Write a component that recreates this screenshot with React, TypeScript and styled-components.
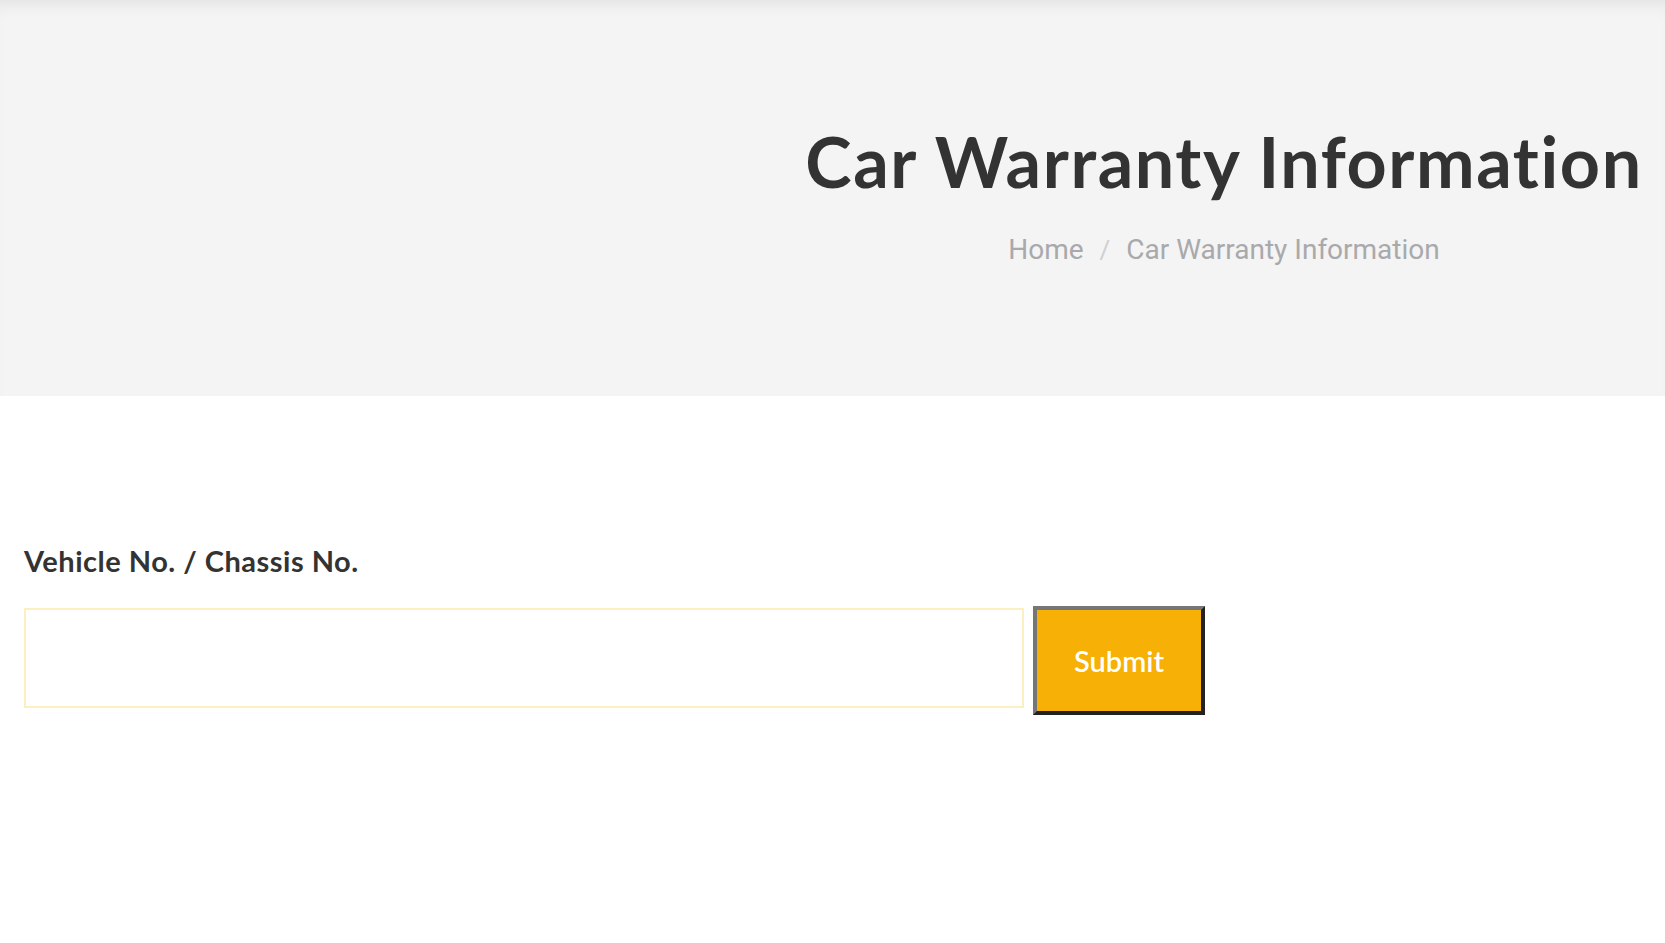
import React from "react";
import styled, { createGlobalStyle } from "styled-components";

const Global = createGlobalStyle`
  html, body { margin: 0; padding: 0; background: #ffffff; }
  body { font-family: "Lato", "Open Sans", sans-serif; }
  * { box-sizing: border-box; }
`;

const Page = styled.div`
  width: 100%;
  min-height: 943px;
  background: #ffffff;
`;

const Banner = styled.header`
  height: 396px;
  background: #f4f4f4;
  box-shadow: inset 0 14px 18px -12px rgba(0, 0, 0, 0.09);
  display: grid;
  grid-template-columns: 783px 1fr;
`;

const BannerContent = styled.div`
  grid-column: 2;
  display: flex;
  flex-direction: column;
  align-items: center;
  padding-top: 119px;
`;

const Title = styled.h1`
  margin: 0;
  font-family: "Lato", sans-serif;
  font-weight: 700;
  font-size: 70px;
  line-height: 1.2;
  color: #333333;
  letter-spacing: 1.6px;
  font-variant-ligatures: none;
  white-space: nowrap;
`;

const Crumbs = styled.nav`
  margin-top: 30px;
  display: flex;
  align-items: center;
  gap: 16px;
  font-family: "Roboto", sans-serif;
  font-size: 28px;
  font-weight: 400;
  color: #a9a9ac;
`;

const Sep = styled.span`
  color: #cfcfd1;
  font-size: 26px;
`;

const Crumb = styled.span`
  white-space: nowrap;
`;

const FormSection = styled.section`
  padding: 148px 24px 0;
`;

const Label = styled.label`
  display: block;
  font-family: "Lato", sans-serif;
  font-weight: 700;
  font-size: 29px;
  line-height: 1.2;
  letter-spacing: 0.5px;
  color: #333333;
  margin-bottom: 29px;
`;

const Row = styled.div`
  display: flex;
  align-items: flex-start;
  gap: 9px;
`;

const Input = styled.input`
  width: 1000px;
  height: 100px;
  border: 2px solid #fdf0c0;
  background: #ffffff;
  outline: none;
  padding: 0 16px;
  font-family: "Lato", sans-serif;
  font-size: 24px;
`;

const Submit = styled.button`
  width: 172px;
  height: 109px;
  margin-top: -2px;
  background: #f6b006;
  border-style: solid;
  border-width: 4px;
  border-color: #767676 #222222 #222222 #767676;
  color: #ffffff;
  font-family: "Lato", sans-serif;
  font-weight: 600;
  font-size: 29px;
  cursor: pointer;
  padding: 0;
`;

export default function App() {
  return (
    <Page>
      <Global />
      <Banner>
        <BannerContent>
          <Title>Car Warranty Information</Title>
          <Crumbs>
            <Crumb>Home</Crumb>
            <Sep>/</Sep>
            <Crumb>Car Warranty Information</Crumb>
          </Crumbs>
        </BannerContent>
      </Banner>
      <FormSection>
        <Label htmlFor="vin">Vehicle No. / Chassis No.</Label>
        <Row>
          <Input id="vin" type="text" />
          <Submit type="submit">Submit</Submit>
        </Row>
      </FormSection>
    </Page>
  );
}
